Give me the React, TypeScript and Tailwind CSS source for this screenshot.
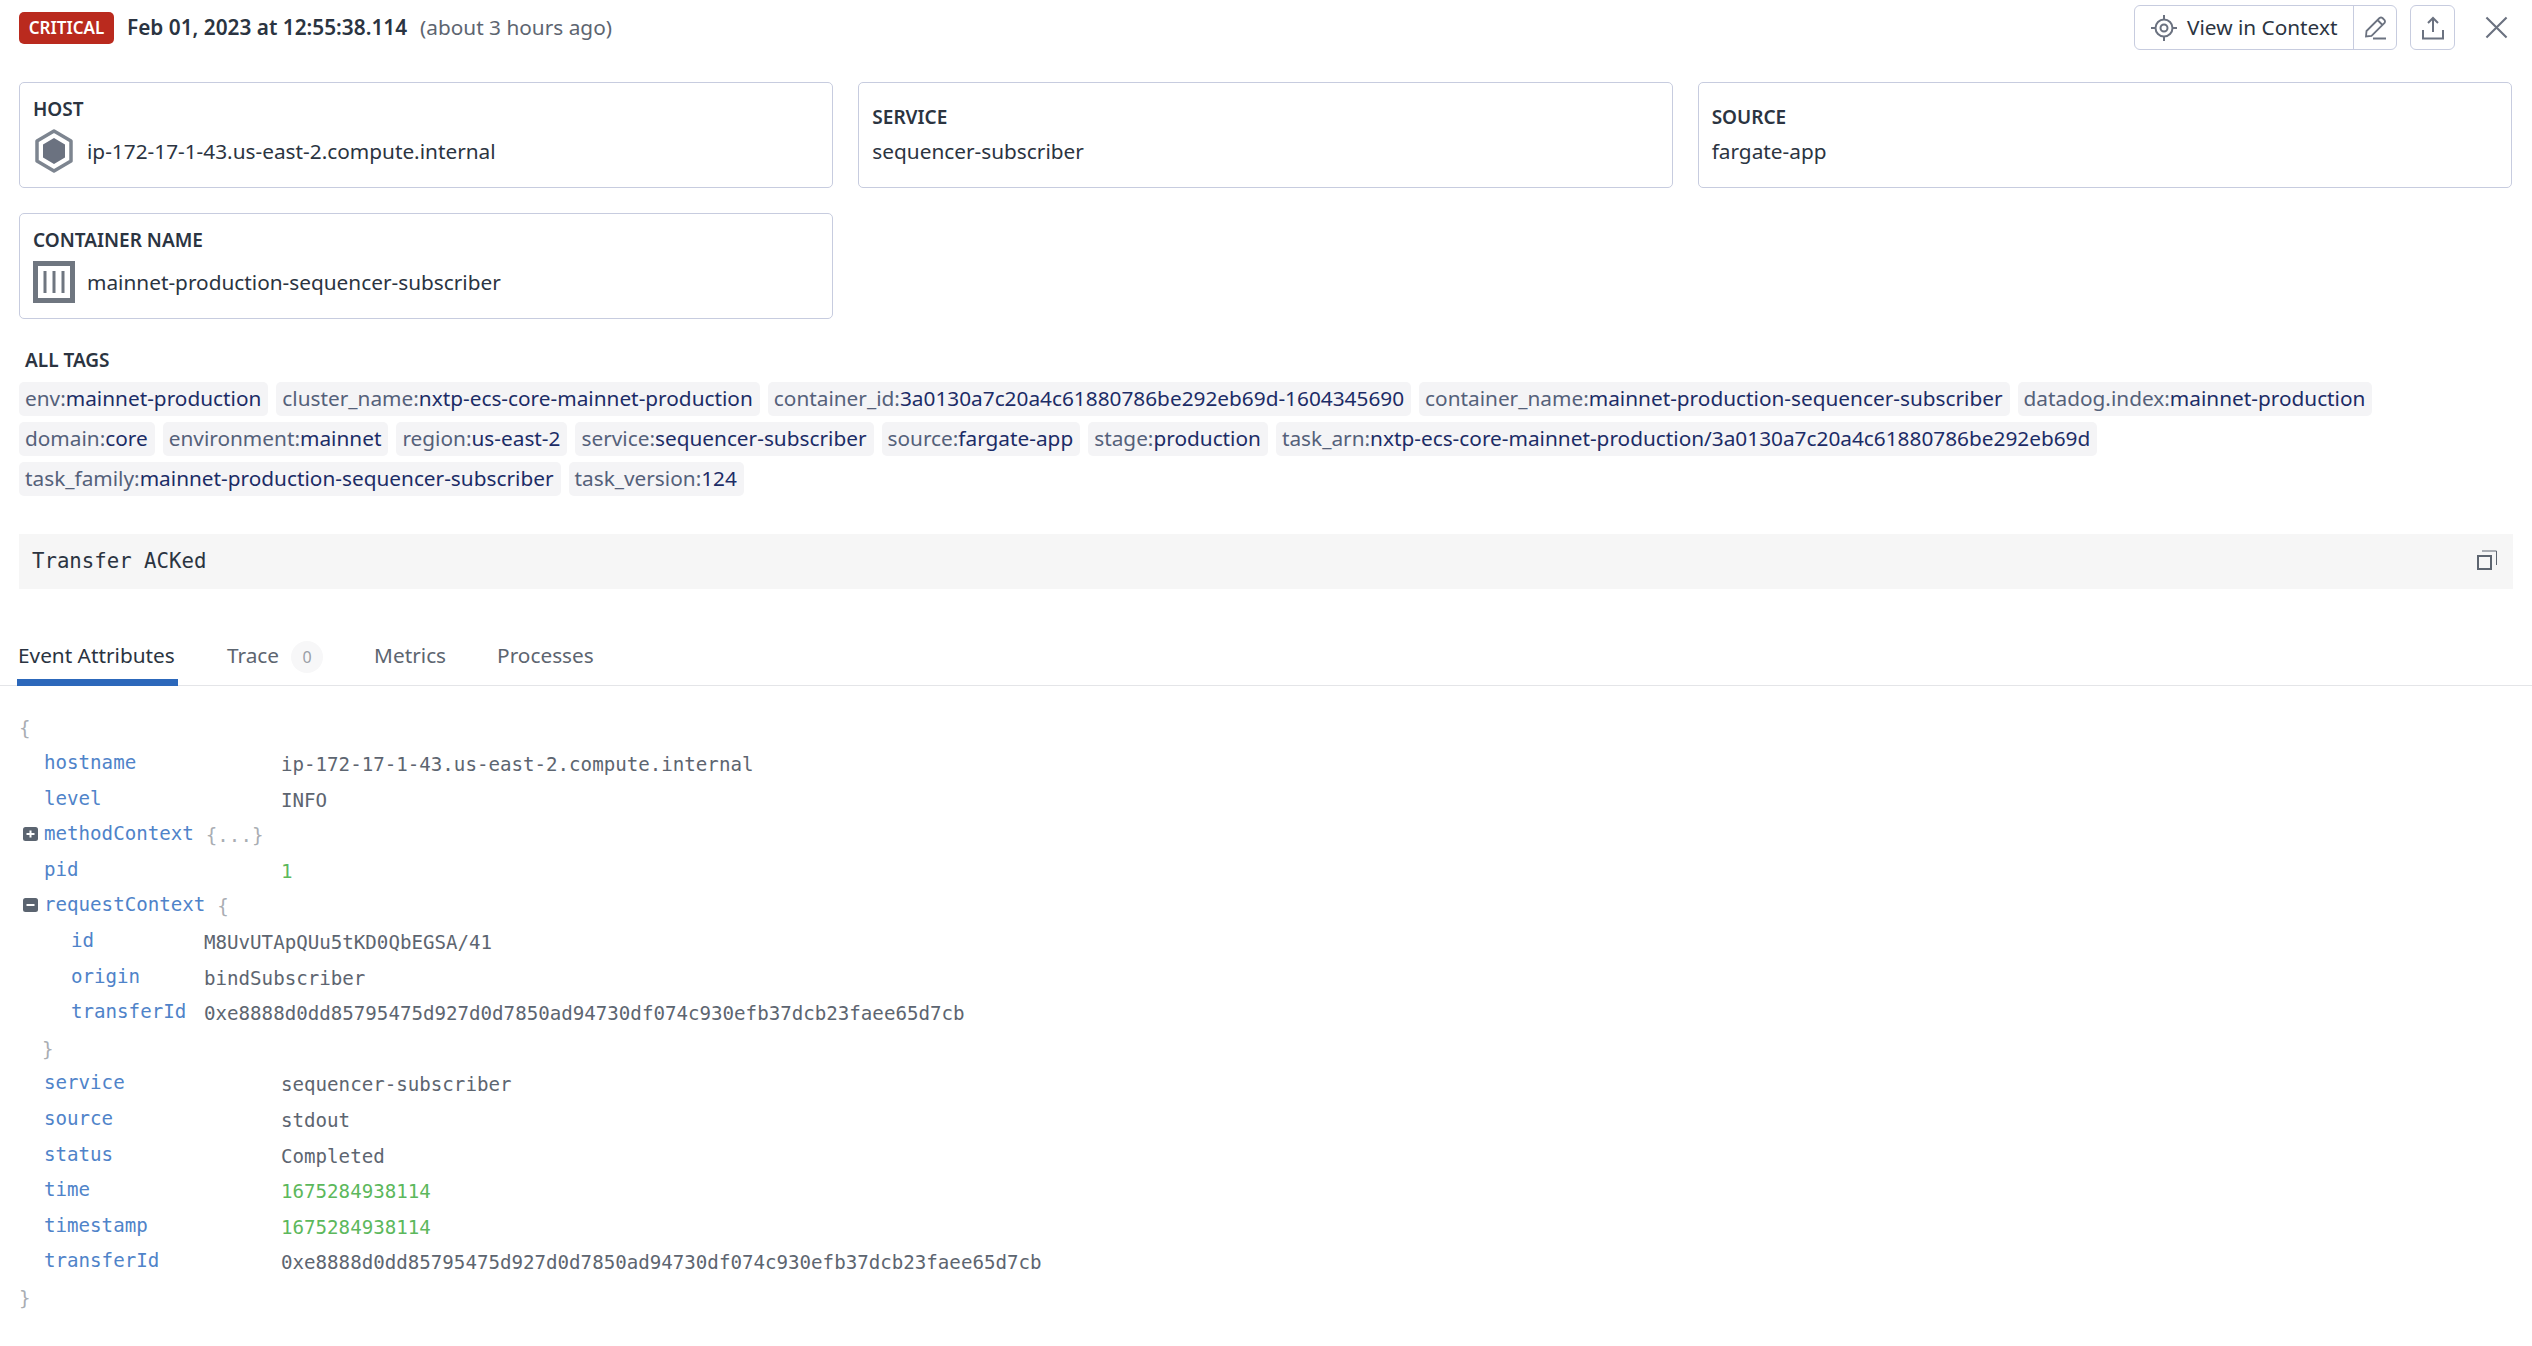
const sans = "font-['Noto_Sans',sans-serif]";
const mono = "font-['DejaVu_Sans_Mono',monospace]";

type Tag = [string, string];

const tagRows: Tag[][] = [
  [
    ["env", "mainnet-production"],
    ["cluster_name", "nxtp-ecs-core-mainnet-production"],
    ["container_id", "3a0130a7c20a4c61880786be292eb69d-1604345690"],
    ["container_name", "mainnet-production-sequencer-subscriber"],
    ["datadog.index", "mainnet-production"],
  ],
  [
    ["domain", "core"],
    ["environment", "mainnet"],
    ["region", "us-east-2"],
    ["service", "sequencer-subscriber"],
    ["source", "fargate-app"],
    ["stage", "production"],
    ["task_arn", "nxtp-ecs-core-mainnet-production/3a0130a7c20a4c61880786be292eb69d"],
  ],
  [
    ["task_family", "mainnet-production-sequencer-subscriber"],
    ["task_version", "124"],
  ],
];

function HostIcon() {
  return (
    <svg width="42" height="44" viewBox="0 0 42 44">
      <path d="M21 2 L38 12 V32 L21 42 L4 32 V12 Z" fill="none" stroke="#7d8590" strokeWidth="3.5" strokeLinejoin="round" />
      <path d="M21 9 L32 15.5 V28.5 L21 35 L10 28.5 V15.5 Z" fill="#6b7280" />
    </svg>
  );
}

function ContainerIcon() {
  return (
    <svg width="42" height="42" viewBox="0 0 42 42">
      <rect x="2.5" y="2.5" width="37" height="37" fill="none" stroke="#6f7680" strokeWidth="5" />
      <path d="M12 10 V32 M21 10 V32 M30 10 V32" stroke="#6f7680" strokeWidth="3" />
    </svg>
  );
}

function Card({ label, value, icon }: { label: string; value: string; icon?: React.ReactNode }) {
  return (
    <div className="flex h-[106px] flex-col rounded-[5px] border border-[#c7ccdf] px-[13px]">
      {icon ? (
        <>
          <div className="mt-[13px] text-[19px] leading-[26px] font-semibold text-[#2b3441]">{label}</div>
          <div className="mt-[7px] flex h-[44px] items-center gap-[12px]">
            <span className="w-[42px] shrink-0">{icon}</span>
            <span className="text-[20.8px] leading-[30px] text-[#2b3441]">{value}</span>
          </div>
        </>
      ) : (
        <div>
          <div className="mt-[21px] text-[19px] leading-[26px] font-semibold text-[#2b3441]">{label}</div>
          <div className="mt-[6px] text-[20.8px] leading-[30px] text-[#2b3441]">{value}</div>
        </div>
      )}
    </div>
  );
}

function Key({ children }: { children: string }) {
  return <span className="relative -top-[2px] text-[#4f83c9]">{children}</span>;
}

function Toggle({ open }: { open: boolean }) {
  return (
    <svg width="15" height="14" viewBox="0 0 15 14" className="shrink-0 -translate-y-[3px]">
      <rect width="15" height="14" rx="2.5" fill="#5b6470" />
      <path d={open ? "M3.5 7 H11.5" : "M3.5 7 H11.5 M7.5 3.5 V10.5"} stroke="#fff" strokeWidth="2" />
    </svg>
  );
}

function Row({ name, value, color = "text-[#5d6570]", nested }: { name: string; value: string; color?: string; nested?: boolean }) {
  return (
    <div className={`flex h-[35.6px] items-center ${nested ? "pl-[71px]" : "pl-[44px]"}`}>
      <span className={`shrink-0 ${nested ? "w-[133px]" : "w-[237px]"}`}>
        <Key>{name}</Key>
      </span>
      <span className={color}>{value}</span>
    </div>
  );
}

function Brace({ children, indent }: { children: string; indent: string }) {
  return <div className={`flex h-[35.6px] items-center text-[#a9adb3] ${indent}`}>{children}</div>;
}

export default function App() {
  return (
    <div className={`h-[1346px] w-[2532px] overflow-hidden bg-white ${sans}`}>
      <header className="flex h-[55px] items-start justify-between pl-[19px] pr-[24px] pt-[5px]">
        <div className="flex h-[45px] items-center">
          <span className="flex h-[32px] w-[95px] items-center justify-center rounded-[5px] bg-[#ba2a1e] text-[17px] font-semibold text-white">
            CRITICAL
          </span>
          <span className="ml-[13px] text-[20.8px] font-semibold text-[#2b3441]">Feb 01, 2023 at 12:55:38.114</span>
          <span className="ml-[13px] text-[20.8px] text-[#5d6570]">(about 3 hours ago)</span>
        </div>
        <div className="flex items-center">
          <div className="flex h-[45px] w-[263px] items-center rounded-[6px] border border-[#c7ccdf]">
            <div className="flex h-full w-[219px] items-center gap-[10px] border-r border-[#c7ccdf] pl-[16px]">
              <svg width="26" height="26" viewBox="0 0 26 26" fill="none" stroke="#6b7280" strokeWidth="2" className="shrink-0">
                <circle cx="13" cy="13" r="8.5" />
                <circle cx="13" cy="13" r="3.5" />
                <path d="M13 0 V4.5 M13 21.5 V26 M0 13 H4.5 M21.5 13 H26" />
              </svg>
              <span className="text-[20.8px] text-[#2b3441]">View in Context</span>
            </div>
            <div className="flex flex-1 items-center justify-center">
              <svg width="24" height="24" viewBox="0 0 24 24" fill="none" stroke="#6b7280" strokeWidth="1.8">
                <path d="M3 20.5 L3.5 15 L16.5 2 Q18 1 19.5 2 L21.5 4 Q22.5 5.5 21.5 7 L8.5 20 Z M14.5 4 L19.5 9" />
                <path d="M10 22.5 H23" strokeWidth="2" />
              </svg>
            </div>
          </div>
          <div className="ml-[13px] flex h-[45px] w-[45px] items-center justify-center rounded-[6px] border border-[#c7ccdf]">
            <svg width="22" height="24" viewBox="0 0 22 24" fill="none" stroke="#6b7280" strokeWidth="2">
              <path d="M11 16 V2 M6 7 L11 2 L16 7" />
              <path d="M1 14 V22.5 H21 V14" />
            </svg>
          </div>
          <svg width="23" height="23" viewBox="0 0 24 24" fill="none" stroke="#6b7280" strokeWidth="2.2" className="ml-[30px]">
            <path d="M1.5 1.5 L22.5 22.5 M22.5 1.5 L1.5 22.5" />
          </svg>
        </div>
      </header>

      <section className="mt-[27px] ml-[19px] grid w-[2493px] grid-cols-3 gap-x-[25px] gap-y-[25px]">
        <Card label="HOST" value="ip-172-17-1-43.us-east-2.compute.internal" icon={<HostIcon />} />
        <Card label="SERVICE" value="sequencer-subscriber" />
        <Card label="SOURCE" value="fargate-app" />
        <Card label="CONTAINER NAME" value="mainnet-production-sequencer-subscriber" icon={<ContainerIcon />} />
      </section>

      <section className="mt-[27px] px-[19px]">
        <h3 className="pl-[6px] text-[19px] leading-[28px] font-semibold text-[#2b3441]">ALL TAGS</h3>
        <div className="mt-[8px] flex flex-col gap-y-[6px]">
          {tagRows.map((row) => (
            <div key={row[0][0]} className="flex gap-x-[8px]">
              {row.map(([k, v]) => (
                <span key={k} className="flex h-[34px] items-center rounded-[5px] bg-[#f4f4f6] pl-[6px] pr-[7px] text-[20.8px] whitespace-nowrap">
                  <span className="text-[#55617a]">{k}:</span>
                  <span className="text-[#1c2c66]">{v}</span>
                </span>
              ))}
            </div>
          ))}
        </div>
      </section>

      <div className="mx-[19px] mt-[38px] flex h-[55px] items-center justify-between bg-[#f6f6f6] pl-[13px] pr-[16px]">
        <span className={`${mono} text-[20.7px] text-[#2b3441]`}>Transfer ACKed</span>
        <svg width="20" height="20" viewBox="0 0 20 20" fill="none" stroke="#5d6570" className="-translate-y-[2px]">
          <rect x="1" y="6" width="13" height="13" strokeWidth="2" />
          <path d="M5 1 H19.5 V15" strokeWidth="1" />
        </svg>
      </div>

      <nav className="mt-[40px] flex h-[57px] items-center border-b border-[#e4e5e8] pl-[18px] text-[20.8px] text-[#5d6570]">
        <div className="relative flex h-full w-[160px] items-center pb-[2px] text-[#2b3441]">
          Event Attributes
          <span className="absolute right-0 -bottom-[1px] left-[-1px] h-[7px] bg-[#2c68bb]" />
        </div>
        <span className="ml-[49px] pb-[2px]">Trace</span>
        <span className="ml-[12px] flex h-[32px] w-[32px] items-center justify-center rounded-full bg-[#f7f7f8] text-[16px] text-[#9a9ea6]">0</span>
        <span className="ml-[51px] pb-[2px]">Metrics</span>
        <span className="ml-[51px] pb-[2px]">Processes</span>
      </nav>

      <section className={`mt-[26px] text-[19.15px] ${mono}`}>
        <Brace indent="pl-[19px]">{"{"}</Brace>
        <Row name="hostname" value="ip-172-17-1-43.us-east-2.compute.internal" />
        <Row name="level" value="INFO" />
        <div className="flex h-[35.6px] items-center pl-[23px]">
          <Toggle open={false} />
          <span className="ml-[6px]"><Key>methodContext</Key></span>
          <span className="ml-[12px] text-[#a9adb3]">{"{...}"}</span>
        </div>
        <Row name="pid" value="1" color="text-[#5cb85c]" />
        <div className="flex h-[35.6px] items-center pl-[23px]">
          <Toggle open />
          <span className="ml-[6px]"><Key>requestContext</Key></span>
          <span className="ml-[12px] text-[#a9adb3]">{"{"}</span>
        </div>
        <Row nested name="id" value="M8UvUTApQUu5tKD0QbEGSA/41" />
        <Row nested name="origin" value="bindSubscriber" />
        <Row nested name="transferId" value="0xe8888d0dd85795475d927d0d7850ad94730df074c930efb37dcb23faee65d7cb" />
        <Brace indent="pl-[42px]">{"}"}</Brace>
        <Row name="service" value="sequencer-subscriber" />
        <Row name="source" value="stdout" />
        <Row name="status" value="Completed" />
        <Row name="time" value="1675284938114" color="text-[#5cb85c]" />
        <Row name="timestamp" value="1675284938114" color="text-[#5cb85c]" />
        <Row name="transferId" value="0xe8888d0dd85795475d927d0d7850ad94730df074c930efb37dcb23faee65d7cb" />
        <Brace indent="pl-[19px]">{"}"}</Brace>
      </section>
    </div>
  );
}
